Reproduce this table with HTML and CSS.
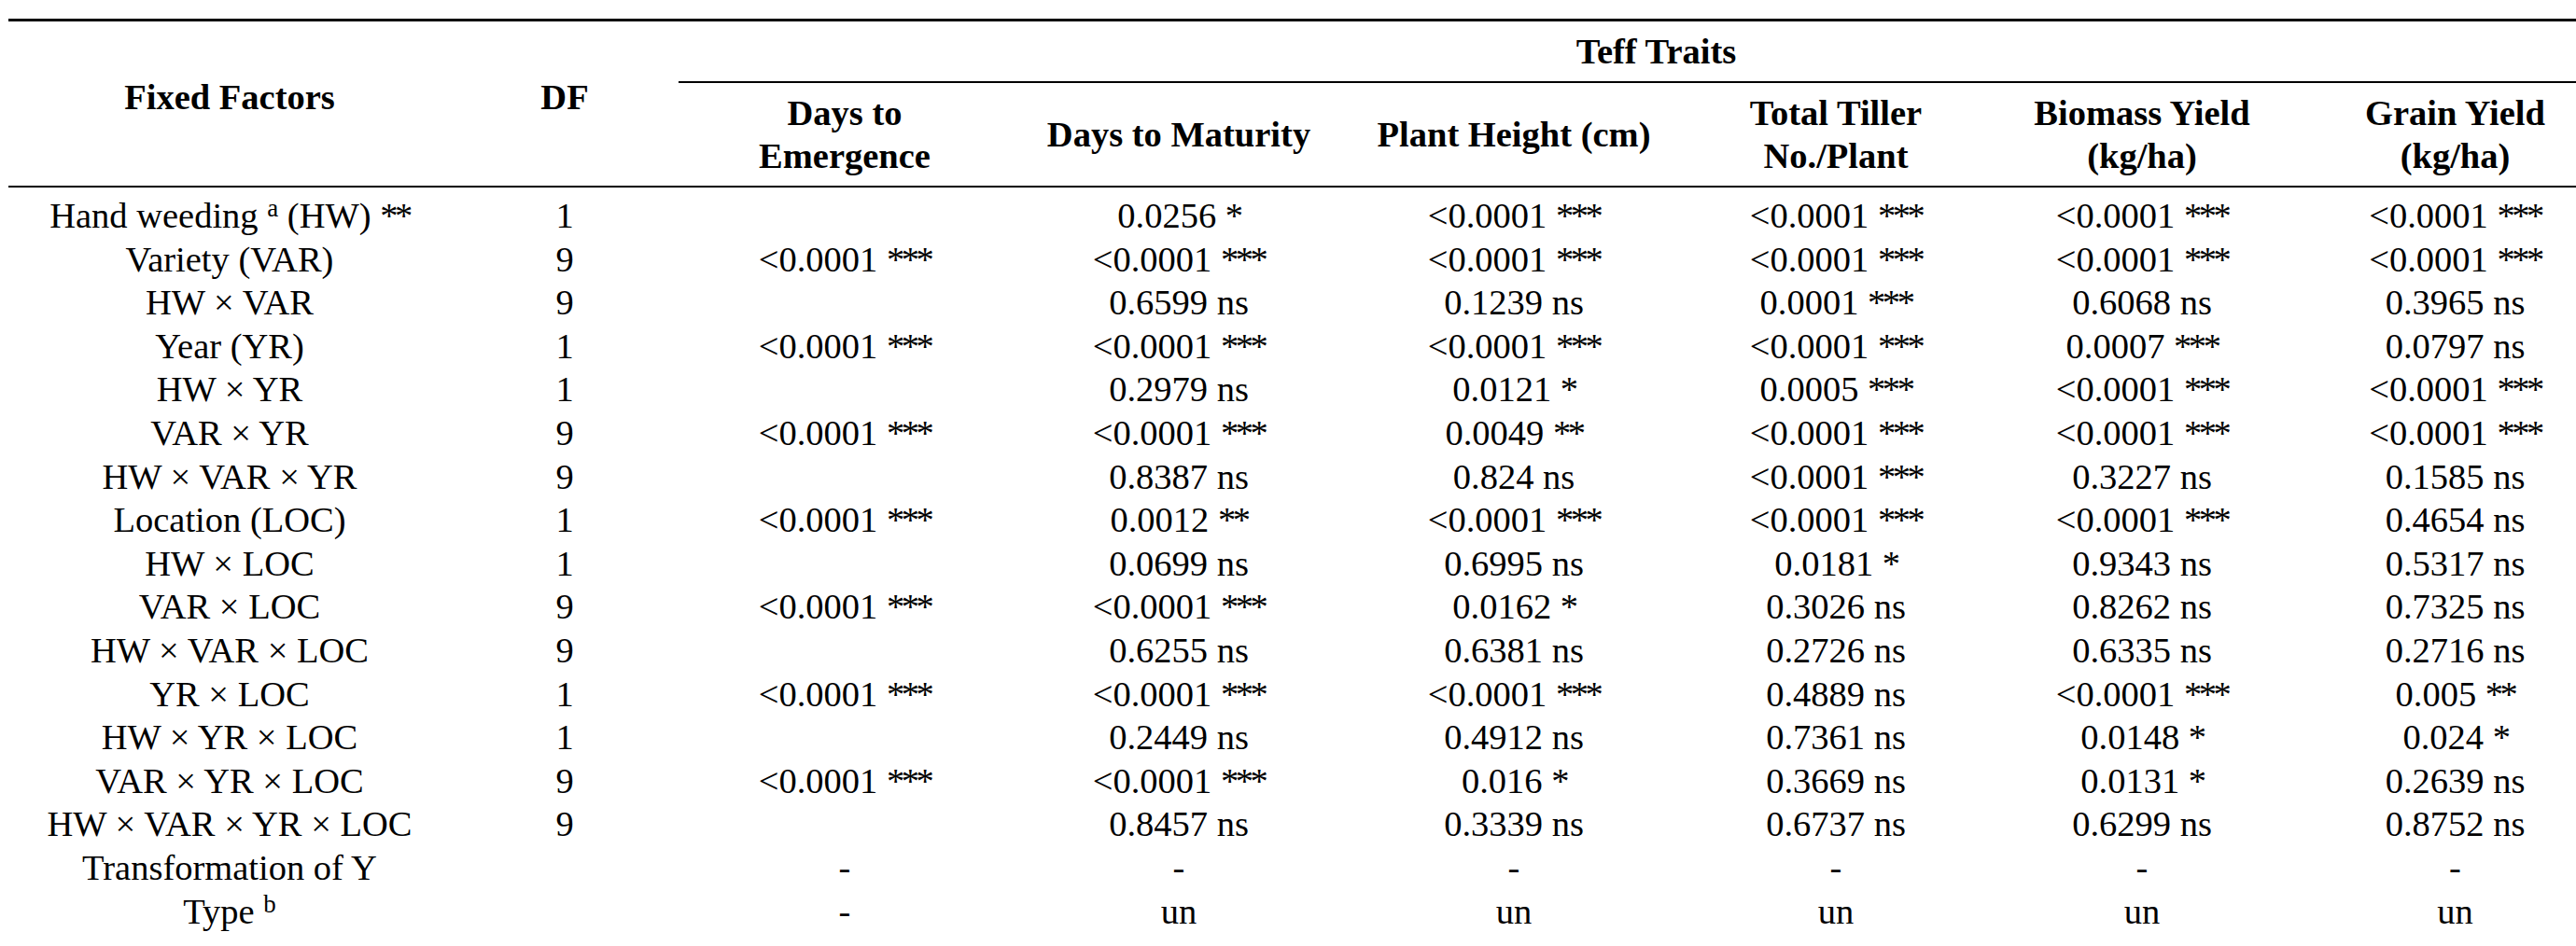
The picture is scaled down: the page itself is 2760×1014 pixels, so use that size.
FILE: index.html
```html
<!DOCTYPE html>
<html lang="en">
<head>
<meta charset="utf-8">
<title>Teff Traits ANOVA</title>
<link rel="stylesheet" href="styles.css">
</head>
<body>
<table class="anova">
  <colgroup>
    <col class="c-factor">
    <col class="c-df">
    <col class="c-emerg">
    <col class="c-mat">
    <col class="c-height">
    <col class="c-tiller">
    <col class="c-bio">
    <col class="c-grain">
  </colgroup>
  <thead>
    <tr class="h1">
      <th rowspan="2" class="rs">Fixed Factors</th>
      <th rowspan="2" class="rs">DF</th>
      <th colspan="6" class="group">Teff Traits</th>
    </tr>
    <tr class="h2">
      <th>Days to<br>Emergence</th>
      <th>Days to Maturity</th>
      <th>Plant Height (cm)</th>
      <th>Total Tiller<br>No./Plant</th>
      <th>Biomass Yield<br>(kg/ha)</th>
      <th>Grain Yield<br>(kg/ha)</th>
    </tr>
  </thead>
  <tbody>
    <tr class="first">
      <td>Hand weeding <sup>a</sup> (HW) <span class="sig">**</span></td><td>1</td><td></td>
      <td>0.0256 <span class="sig">*</span></td><td>&lt;0.0001 <span class="sig">***</span></td><td>&lt;0.0001 <span class="sig">***</span></td><td>&lt;0.0001 <span class="sig">***</span></td><td>&lt;0.0001 <span class="sig">***</span></td>
    </tr>
    <tr>
      <td>Variety (VAR)</td><td>9</td><td>&lt;0.0001 <span class="sig">***</span></td>
      <td>&lt;0.0001 <span class="sig">***</span></td><td>&lt;0.0001 <span class="sig">***</span></td><td>&lt;0.0001 <span class="sig">***</span></td><td>&lt;0.0001 <span class="sig">***</span></td><td>&lt;0.0001 <span class="sig">***</span></td>
    </tr>
    <tr>
      <td>HW × VAR</td><td>9</td><td></td>
      <td>0.6599 ns</td><td>0.1239 ns</td><td>0.0001 <span class="sig">***</span></td><td>0.6068 ns</td><td>0.3965 ns</td>
    </tr>
    <tr>
      <td>Year (YR)</td><td>1</td><td>&lt;0.0001 <span class="sig">***</span></td>
      <td>&lt;0.0001 <span class="sig">***</span></td><td>&lt;0.0001 <span class="sig">***</span></td><td>&lt;0.0001 <span class="sig">***</span></td><td>0.0007 <span class="sig">***</span></td><td>0.0797 ns</td>
    </tr>
    <tr>
      <td>HW × YR</td><td>1</td><td></td>
      <td>0.2979 ns</td><td>0.0121 <span class="sig">*</span></td><td>0.0005 <span class="sig">***</span></td><td>&lt;0.0001 <span class="sig">***</span></td><td>&lt;0.0001 <span class="sig">***</span></td>
    </tr>
    <tr>
      <td>VAR × YR</td><td>9</td><td>&lt;0.0001 <span class="sig">***</span></td>
      <td>&lt;0.0001 <span class="sig">***</span></td><td>0.0049 <span class="sig">**</span></td><td>&lt;0.0001 <span class="sig">***</span></td><td>&lt;0.0001 <span class="sig">***</span></td><td>&lt;0.0001 <span class="sig">***</span></td>
    </tr>
    <tr>
      <td>HW × VAR × YR</td><td>9</td><td></td>
      <td>0.8387 ns</td><td>0.824 ns</td><td>&lt;0.0001 <span class="sig">***</span></td><td>0.3227 ns</td><td>0.1585 ns</td>
    </tr>
    <tr>
      <td>Location (LOC)</td><td>1</td><td>&lt;0.0001 <span class="sig">***</span></td>
      <td>0.0012 <span class="sig">**</span></td><td>&lt;0.0001 <span class="sig">***</span></td><td>&lt;0.0001 <span class="sig">***</span></td><td>&lt;0.0001 <span class="sig">***</span></td><td>0.4654 ns</td>
    </tr>
    <tr>
      <td>HW × LOC</td><td>1</td><td></td>
      <td>0.0699 ns</td><td>0.6995 ns</td><td>0.0181 <span class="sig">*</span></td><td>0.9343 ns</td><td>0.5317 ns</td>
    </tr>
    <tr>
      <td>VAR × LOC</td><td>9</td><td>&lt;0.0001 <span class="sig">***</span></td>
      <td>&lt;0.0001 <span class="sig">***</span></td><td>0.0162 <span class="sig">*</span></td><td>0.3026 ns</td><td>0.8262 ns</td><td>0.7325 ns</td>
    </tr>
    <tr>
      <td>HW × VAR × LOC</td><td>9</td><td></td>
      <td>0.6255 ns</td><td>0.6381 ns</td><td>0.2726 ns</td><td>0.6335 ns</td><td>0.2716 ns</td>
    </tr>
    <tr>
      <td>YR × LOC</td><td>1</td><td>&lt;0.0001 <span class="sig">***</span></td>
      <td>&lt;0.0001 <span class="sig">***</span></td><td>&lt;0.0001 <span class="sig">***</span></td><td>0.4889 ns</td><td>&lt;0.0001 <span class="sig">***</span></td><td>0.005 <span class="sig">**</span></td>
    </tr>
    <tr>
      <td>HW × YR × LOC</td><td>1</td><td></td>
      <td>0.2449 ns</td><td>0.4912 ns</td><td>0.7361 ns</td><td>0.0148 <span class="sig">*</span></td><td>0.024 <span class="sig">*</span></td>
    </tr>
    <tr>
      <td>VAR × YR × LOC</td><td>9</td><td>&lt;0.0001 <span class="sig">***</span></td>
      <td>&lt;0.0001 <span class="sig">***</span></td><td>0.016 <span class="sig">*</span></td><td>0.3669 ns</td><td>0.0131 <span class="sig">*</span></td><td>0.2639 ns</td>
    </tr>
    <tr>
      <td>HW × VAR × YR × LOC</td><td>9</td><td></td>
      <td>0.8457 ns</td><td>0.3339 ns</td><td>0.6737 ns</td><td>0.6299 ns</td><td>0.8752 ns</td>
    </tr>
    <tr>
      <td>Transformation of Y</td><td></td><td>-</td>
      <td>-</td><td>-</td><td>-</td><td>-</td><td>-</td>
    </tr>
    <tr>
      <td>Type <sup>b</sup></td><td></td><td>-</td>
      <td>un</td><td>un</td><td>un</td><td>un</td><td>un</td>
    </tr>
  </tbody>
</table>
</body>
</html>
```
FILE: styles.css
```css
html, body {
  margin: 0;
  padding: 0;
  background: #ffffff;
  overflow: hidden;
}

body {
  font-family: "Liberation Serif", "Times New Roman", serif;
  font-size: 38.5px;
  color: #000000;
}

.anova {
  margin: 20px 0 0 9px;
  width: 2791px;
  table-layout: fixed;
  border-collapse: collapse;
  border-spacing: 0;
  border-top: 3px solid #000;
}

.c-factor { width: 474px; }
.c-df { width: 244px; }
.c-emerg { width: 356px; }
.c-mat { width: 360px; }
.c-height { width: 358px; }
.c-tiller { width: 332px; }
.c-bio { width: 324px; }
.c-grain { width: 347px; }

.anova th,
.anova td {
  padding: 0;
  text-align: center;
  vertical-align: middle;
  white-space: nowrap;
}

.anova th {
  font-weight: bold;
  line-height: 46px;
}

.h1 .group {
  height: 64px;
  border-bottom: 2px solid #000;
  padding-left: 18px;
}

.h1 .rs {
  border-bottom: 2px solid #000;
  padding-bottom: 14px;
}

.h2 th {
  height: 92px;
  padding: 9px 0;
  border-bottom: 2px solid #000;
}

.anova td {
  line-height: 46.6px;
  height: 46.6px;
}

.anova tbody tr.first td {
  padding-top: 7px;
}

.anova sup {
  font-size: 0.7em;
  line-height: 0;
  vertical-align: 0.45em;
}

.sig {
  letter-spacing: -0.09em;
}
```
